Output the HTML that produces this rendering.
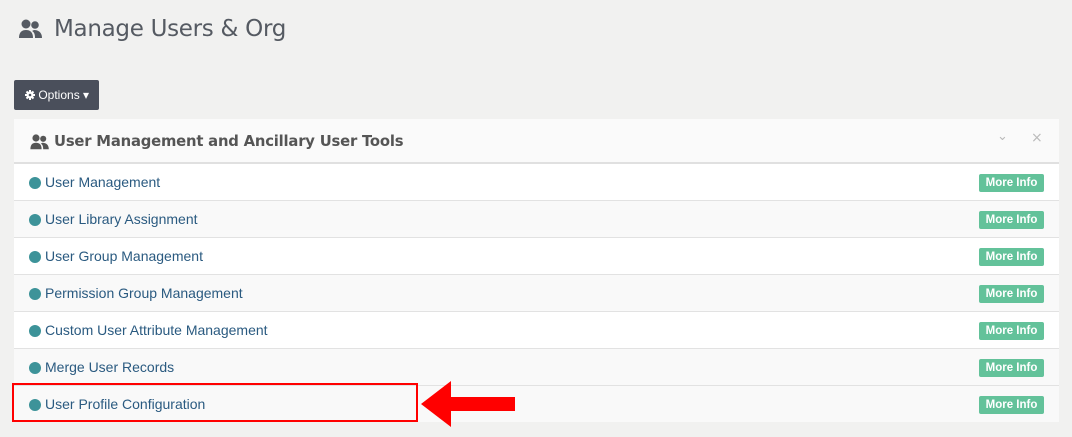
<!DOCTYPE html>
<html><head><style>
body{margin:0;width:1072px;height:437px;background:#f1f1f0;font-family:"Liberation Sans",sans-serif;position:relative;overflow:hidden}
h1{position:absolute;left:54px;top:16px;margin:0;font-weight:normal;font-size:23px;color:#555a62;font-family:"DejaVu Sans","Liberation Sans",sans-serif;letter-spacing:-0.3px}
.btn{position:absolute;left:14px;top:80px;width:85px;height:30px;background:#4a4f5b;border-radius:2px;color:#fff;font-size:12px;line-height:30px;box-sizing:border-box;padding-left:11px}
.panel{position:absolute;left:14px;top:119px;width:1045px;height:303px;background:#fafafa}
.hdr{height:43px;border-bottom:2px solid #e0e0e0;position:relative}
.hdr span{position:absolute;left:40px;top:14px;font-weight:bold;font-size:14.8px;color:#555;font-family:"DejaVu Sans",sans-serif;letter-spacing:-0.2px}
.row{height:36px;border-bottom:1px solid #e2e2e2;position:relative}
.row:nth-child(even){background:#f9f9f9}
.row:nth-child(odd){background:#fff}
.row .dot{position:absolute;left:15px;top:13px;width:12px;height:12px;border-radius:50%;background:#3d9399}
.row .t{position:absolute;left:31px;top:10px;font-size:14px;color:#2a5a80}
.row .m{position:absolute;right:15px;top:10px;width:65px;height:18px;background:#63c29a;border-radius:2px;color:#fff;font-weight:bold;font-size:11.5px;line-height:18px;text-align:center}
</style></head><body>
<svg style="position:absolute;left:19px;top:19px" width="24" height="20" viewBox="0 0 24 20"><circle cx="7" cy="5" r="4.5" fill="#555a62"/><path d="M0 19c0-6 3-8 7-8s7 2 7 8z" fill="#555a62"/><circle cx="16" cy="6" r="3.8" fill="#555a62"/><path d="M15 11c4 0 8 2 8 8h-7c0-4-1-6-3-7z" fill="#555a62"/></svg>
<h1>Manage Users &amp; Org</h1>
<div class="btn"><svg width="10" height="10" viewBox="0 0 10 10" style="vertical-align:-1px"><circle cx="5" cy="5" r="3.6" fill="#fff"/><g stroke="#fff" stroke-width="2"><path d="M5 0v10M0 5h10M1.5 1.5l7 7M8.5 1.5l-7 7"/></g><circle cx="5" cy="5" r="1.3" fill="#4a4f5b"/></svg> Options ▾</div>
<div class="panel">
<div class="hdr"><svg style="position:absolute;left:16px;top:15px" width="20" height="16" viewBox="0 0 24 20"><circle cx="7" cy="5" r="4.5" fill="#555"/><path d="M0 19c0-6 3-8 7-8s7 2 7 8z" fill="#555"/><circle cx="16" cy="6" r="3.8" fill="#555"/><path d="M15 11c4 0 8 2 8 8h-7c0-4-1-6-3-7z" fill="#555"/></svg><span>User Management and Ancillary User Tools</span>
<span style="left:983px;top:10px;color:#bbb;font-weight:normal;font-size:13px">⌄</span><span style="left:1017px;top:11px;color:#bbb;font-weight:normal;font-size:14px">×</span></div>
<div>
<div class="row"><i class="dot"></i><span class="t">User Management</span><span class="m">More Info</span></div>
<div class="row"><i class="dot"></i><span class="t">User Library Assignment</span><span class="m">More Info</span></div>
<div class="row"><i class="dot"></i><span class="t">User Group Management</span><span class="m">More Info</span></div>
<div class="row"><i class="dot"></i><span class="t">Permission Group Management</span><span class="m">More Info</span></div>
<div class="row"><i class="dot"></i><span class="t">Custom User Attribute Management</span><span class="m">More Info</span></div>
<div class="row"><i class="dot"></i><span class="t">Merge User Records</span><span class="m">More Info</span></div>
<div class="row" style="background:#f9f9f9;border:none"><i class="dot"></i><span class="t">User Profile Configuration</span><span class="m">More Info</span></div>
</div></div>
<div style="position:absolute;left:12px;top:383px;width:402px;height:35px;border:2px solid #f00"></div>
<svg style="position:absolute;left:0;top:0" width="1072" height="437"><polygon points="421,404 451,381 451,397 515,397 515,411 451,411 451,427" fill="#f00"/></svg>
</body></html>
